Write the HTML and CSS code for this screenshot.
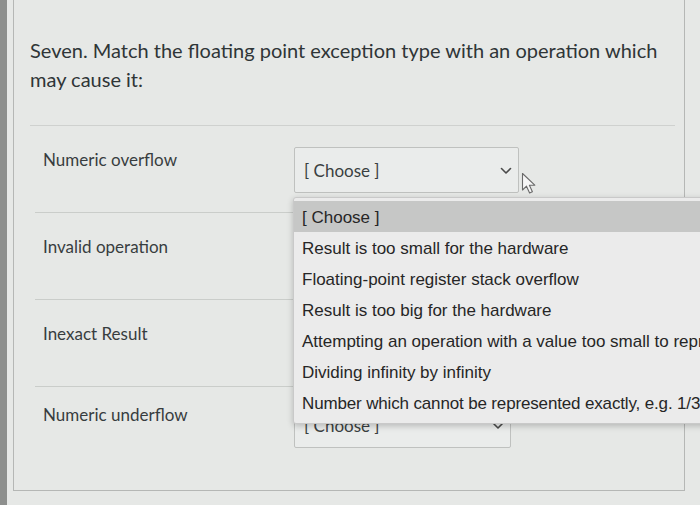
FILE: index.html
```html
<!DOCTYPE html>
<html lang="en">
<head>
<meta charset="utf-8">
<title>Matching question</title>
<link rel="stylesheet" href="styles.css">
</head>
<body>
<div class="screen">
  <div class="edge"></div>
  <div class="card">
    <h1 class="question">Seven. Match the floating point exception type with an operation which may cause it:</h1>
    <div class="answers">
      <div class="row">
        <div class="label">Numeric overflow</div>
        <div class="select-wrap">
          <div class="select"><span>[ Choose ]</span><svg class="chev" width="12" height="8" viewBox="0 0 12 8"><path d="M1.5 1.5 L6 6 L10.5 1.5" fill="none" stroke="#4a4a4a" stroke-width="1.6" stroke-linecap="round" stroke-linejoin="round"/></svg></div>
          <ul class="menu">
            <li class="active">[ Choose ]</li>
            <li>Result is too small for the hardware</li>
            <li>Floating-point register stack overflow</li>
            <li>Result is too big for the hardware</li>
            <li>Attempting an operation with a value too small to represent</li>
            <li>Dividing infinity by infinity</li>
            <li class="tight">Number which cannot be represented exactly, e.g. 1/3</li>
          </ul>
          <svg class="cursor" width="16" height="23" viewBox="0 0 16 23"><path d="M1.5 1.5 L1.5 18 L5.5 14.2 L8.6 21 L11.4 19.8 L8.4 13.2 L13.8 13.2 Z" fill="#f6f6f6" stroke="#6a6a6a" stroke-width="1.1" stroke-linejoin="round"/></svg>
        </div>
      </div>
      <div class="row">
        <div class="label">Invalid operation</div>
        <div class="select-wrap">
          <div class="select"><span>[ Choose ]</span><svg class="chev" width="12" height="8" viewBox="0 0 12 8"><path d="M1.5 1.5 L6 6 L10.5 1.5" fill="none" stroke="#4a4a4a" stroke-width="1.6" stroke-linecap="round" stroke-linejoin="round"/></svg></div>
        </div>
      </div>
      <div class="row">
        <div class="label">Inexact Result</div>
        <div class="select-wrap">
          <div class="select"><span>[ Choose ]</span><svg class="chev" width="12" height="8" viewBox="0 0 12 8"><path d="M1.5 1.5 L6 6 L10.5 1.5" fill="none" stroke="#4a4a4a" stroke-width="1.6" stroke-linecap="round" stroke-linejoin="round"/></svg></div>
        </div>
      </div>
      <div class="row">
        <div class="label">Numeric underflow</div>
        <div class="select-wrap">
          <div class="select short"><span>[ Choose ]</span><svg class="chev" width="12" height="8" viewBox="0 0 12 8"><path d="M1.5 1.5 L6 6 L10.5 1.5" fill="none" stroke="#4a4a4a" stroke-width="1.6" stroke-linecap="round" stroke-linejoin="round"/></svg></div>
        </div>
      </div>
    </div>
  </div>
</div>
</body>
</html>
```

FILE: styles.css
```css
html, body {
  margin: 0;
  padding: 0;
  overflow: hidden;
}
body {
  background: #e5e7e5;
  font-family: Lato, "Liberation Sans", sans-serif;
  color: #353a3c;
}
.screen {
  width: 700px;
  height: 505px;
  display: flex;
  align-items: flex-start;
  overflow: hidden;
  background: #e6e8e6;
}
.edge {
  flex: 0 0 7px;
  height: 505px;
  background: #8d8f8d;
}
.card {
  margin-top: -2px;
  margin-left: 6px;
  width: 672px;
  border: 1px solid #b5b7b5;
  padding: 37px 0 22px;
  box-sizing: border-box;
  background: #e6e8e6;
}
.question {
  margin: 0 9px 0 16px;
  padding-bottom: 31px;
  border-bottom: 1px solid #cfd1cf;
  font-size: 20px;
  line-height: 29px;
  font-weight: 400;
  color: #2f3537;
}
.answers {
  margin: 0 13px 0 21px;
}
.row {
  display: flex;
  align-items: flex-start;
  padding: 21px 0 19px;
  border-bottom: 1px solid #cacdca;
}
.row:last-child {
  border-bottom: none;
  padding-top: 15px;
  padding-bottom: 20px;
}
.label {
  flex: 0 0 259px;
  box-sizing: border-box;
  padding: 1px 0 0 8px;
  font-size: 17px;
  line-height: 24px;
  color: #383d3f;
}
.select-wrap {
  position: relative;
}
.select {
  width: 225px;
  height: 46px;
  box-sizing: border-box;
  border: 1px solid #bfc1bf;
  border-radius: 2px;
  background: #eaeceb;
  display: flex;
  align-items: center;
  justify-content: space-between;
  padding: 0 6px 0 9px;
  font-size: 17px;
  color: #3a3f41;
}
.select.short {
  width: 217px;
}
.chev {
  display: block;
  margin-top: 1px;
}
.menu {
  position: absolute;
  left: -1px;
  top: calc(100% + 4px);
  width: 440px;
  margin: 0;
  padding: 3px 0 5px;
  list-style: none;
  background: #ebebeb;
  border: 1px solid #c9c9c9;
  border-radius: 3px;
  box-shadow: 0 2px 6px rgba(0, 0, 0, 0.22);
  font-family: "Liberation Sans", Arial, sans-serif;
  font-size: 17px;
  color: #262626;
  z-index: 2;
}
.menu li {
  height: 31px;
  box-sizing: border-box;
  padding: 2px 8px 0;
  line-height: 29px;
  white-space: nowrap;
}
.menu li.tight {
  letter-spacing: -0.15px;
}
.menu li.active {
  background: #c6c7c6;
}
.cursor {
  position: absolute;
  left: 227px;
  top: 25px;
  z-index: 3;
}
```
